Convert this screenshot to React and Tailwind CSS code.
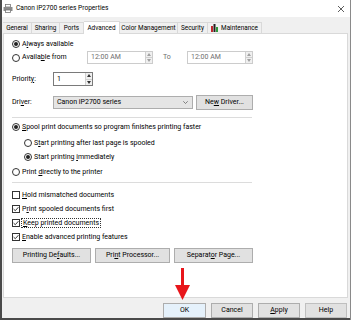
import React from "react";

const F = { fontFamily: 'Roboto, "Noto Sans", sans-serif' };

function U({ children }) {
  return <span className="underline underline-offset-[1px] decoration-[0.5px]">{children}</span>;
}

function Radio({ checked }) {
  return (
    <span className="w-[8px] h-[8px] rounded-full border border-[#333] bg-white flex items-center justify-center shrink-0">
      {checked && <span className="w-[4px] h-[4px] rounded-full bg-[#222]" />}
    </span>
  );
}

function Check({ checked }) {
  return (
    <span className="w-[8px] h-[8px] border border-[#333] bg-white flex items-center justify-center shrink-0">
      {checked && (
        <svg width="6" height="6" viewBox="0 0 6 6">
          <path d="M0.6 3.1 L2.3 4.7 L5.4 1.2" fill="none" stroke="#222" strokeWidth="0.9" />
        </svg>
      )}
    </span>
  );
}

function Spin({ disabled }) {
  const c = disabled ? "#a0a0a0" : "#333";
  return (
    <div className="flex flex-col w-[7px] h-full border-l border-[#d0d0d0]">
      <div className="flex-1 flex items-center justify-center bg-[#f0f0f0] border-b border-[#d0d0d0]">
        <svg width="4" height="3" viewBox="0 0 4 3"><path d="M0 3 L2 0 L4 3Z" fill={c} /></svg>
      </div>
      <div className="flex-1 flex items-center justify-center bg-[#f0f0f0]">
        <svg width="4" height="3" viewBox="0 0 4 3"><path d="M0 0 L2 3 L4 0Z" fill={c} /></svg>
      </div>
    </div>
  );
}

function Btn({ children, w, className = "" }) {
  return (
    <div
      className={`h-[15px] flex items-center justify-center whitespace-nowrap bg-[#e1e1e1] border border-[#adadad] text-[7px] text-black ${className}`}
      style={{ width: w }}
    >
      <span>{children}</span>
    </div>
  );
}

const tab = "h-[11px] flex items-center justify-center whitespace-nowrap bg-[#f0f0f0] border border-b-0 border-l-0 border-[#d9d9d9]";

export default function App() {
  return (
    <div className="w-[351px] h-[320px] bg-[#f0f0f0] relative overflow-hidden text-black" style={F}>
      {/* window edges */}
      <div className="absolute left-0 top-0 bottom-0 w-[2px] bg-[#4a4a4a]" />
      <div className="absolute left-0 right-0 bottom-0 h-[2px] bg-[#4a4a4a]" />
      <div className="absolute right-0 top-0 bottom-0 w-[1px] bg-[#8a8a8a]" />

      {/* title bar */}
      <div className="h-[17px] bg-white flex items-center pl-[3px] pr-[4px]">
        <svg width="10" height="9" viewBox="0 0 10 9" className="shrink-0">
          <rect x="2.5" y="0.5" width="5" height="2.5" fill="#fff" stroke="#777" strokeWidth="0.8" />
          <rect x="0.5" y="3" width="9" height="4" fill="#8a8a8a" />
          <rect x="2.5" y="6" width="5" height="2.5" fill="#fff" stroke="#777" strokeWidth="0.8" />
        </svg>
        <span className="ml-[3px] text-[6.6px] text-black leading-none whitespace-nowrap">Canon iP2700 series Properties</span>
        <span className="ml-auto mr-[2px]">
          <svg width="8" height="8" viewBox="0 0 8 8">
            <path d="M1 1 L7 7 M7 1 L1 7" stroke="#333" strokeWidth="0.8" />
          </svg>
        </span>
      </div>

      {/* tabs */}
      <div className="flex items-end pl-[3px] h-[16px] text-[6.4px] leading-none">
        <div className={`${tab} w-[29px] border-l`}>General</div>
        <div className={`${tab} w-[28px]`}>Sharing</div>
        <div className={`${tab} w-[24px]`}>Ports</div>
        <div className="h-[13px] w-[36px] flex items-center justify-center whitespace-nowrap bg-white border border-b-0 border-l-0 border-[#d9d9d9] relative z-10 -mb-[1px]">Advanced</div>
        <div className={`${tab} w-[58px]`}>Color Management</div>
        <div className={`${tab} w-[30px]`}>Security</div>
        <div className={`${tab} w-[54px] gap-[3px]`}>
          <svg width="7" height="8" viewBox="0 0 7 8">
            <rect x="0" y="2" width="2" height="6" fill="#c0282d" />
            <rect x="2.5" y="0" width="2" height="8" fill="#222" />
            <rect x="5" y="3" width="2" height="5" fill="#2f9a3b" />
          </svg>
          <span>Maintenance</span>
        </div>
      </div>

      {/* panel */}
      <div className="mx-[3px] h-[265px] bg-white border border-[#d9d9d9] text-[7px] leading-none pl-[8px] flex flex-col whitespace-nowrap">
        <div className="mt-[5px] h-[10px] flex items-center">
          <Radio checked />
          <span className="ml-[2px]">A<U>l</U>ways available</span>
        </div>
        <div className="mt-[2px] h-[13px] flex items-center">
          <Radio />
          <span className="ml-[2px] w-[65px]">Availa<U>b</U>le from</span>
          <div className="w-[66px] h-[13px] border border-[#cccccc] bg-white flex items-stretch">
            <span className="flex-1 flex items-center pl-[3px] text-[#6d6d6d]">12:00 AM</span>
            <Spin disabled />
          </div>
          <span className="ml-[10px] w-[24px] text-[#6d6d6d]">To</span>
          <div className="w-[66px] h-[13px] border border-[#cccccc] bg-white flex items-stretch">
            <span className="flex-1 flex items-center pl-[3px] text-[#6d6d6d]">12:00 AM</span>
            <Spin disabled />
          </div>
        </div>
        <div className="mt-[8px] h-[14px] flex items-center">
          <span className="w-[41px]">Priorit<U>y</U>:</span>
          <div className="w-[40px] h-[14px] border border-[#7a7a7a] bg-white flex items-stretch">
            <span className="flex-1 flex items-center pl-[3px]">1</span>
            <Spin />
          </div>
        </div>
        <div className="mt-[10px] h-[13px] flex items-center">
          <span className="w-[41px]">Dri<U>v</U>er:</span>
          <div className="w-[140px] h-[13px] border border-[#adadad] bg-[#e5e5e5] flex items-center pl-[3px] pr-[4px]">
            <span>Canon iP2700 series</span>
            <svg className="ml-auto" width="5" height="3" viewBox="0 0 5 3">
              <path d="M0.3 0.3 L2.5 2.5 L4.7 0.3" fill="none" stroke="#555" strokeWidth="0.7" />
            </svg>
          </div>
          <Btn w="57px" className="ml-[3px] h-[13px]">Ne<U>w</U> Driver...</Btn>
        </div>
        <div className="mt-[8px] h-[1px] w-[240px] bg-[#dcdcdc]" />
        <div className="mt-[4px] h-[10px] flex items-center">
          <Radio checked />
          <span className="ml-[2px]"><U>S</U>pool print documents so program finishes printing faster</span>
        </div>
        <div className="mt-[6px] h-[10px] flex items-center pl-[12px]">
          <Radio />
          <span className="ml-[2px]">S<U>t</U>art printing after last page is spooled</span>
        </div>
        <div className="mt-[4px] h-[10px] flex items-center pl-[12px]">
          <Radio checked />
          <span className="ml-[2px]">Start printing <U>i</U>mmediately</span>
        </div>
        <div className="mt-[5px] h-[10px] flex items-center">
          <Radio />
          <span className="ml-[2px]">Print <U>d</U>irectly to the printer</span>
        </div>
        <div className="mt-[5px] h-[1px] w-[240px] bg-[#dcdcdc]" />
        <div className="mt-[7px] h-[10px] flex items-center">
          <Check />
          <span className="ml-[2px]"><U>H</U>old mismatched documents</span>
        </div>
        <div className="mt-[4px] h-[10px] flex items-center">
          <Check checked />
          <span className="ml-[2px]">P<U>r</U>int spooled documents first</span>
        </div>
        <div className="mt-[4px] h-[10px] flex items-center">
          <Check checked />
          <span className="ml-[1px] px-[1px] h-[10px] flex items-center border border-dotted border-[#333]"><span><U>K</U>eep printed documents</span></span>
        </div>
        <div className="mt-[4px] h-[10px] flex items-center">
          <Check checked />
          <span className="ml-[2px]"><U>E</U>nable advanced printing features</span>
        </div>
        <div className="mt-[6px] flex items-center gap-[4px]">
          <Btn w="79px">Printing De<U>f</U>aults...</Btn>
          <Btn w="75px">Pri<U>n</U>t Processor...</Btn>
          <Btn w="79px">Separat<U>o</U>r Page...</Btn>
        </div>
      </div>

      {/* bottom buttons */}
      <div className="mt-[5px] flex justify-end pr-[4px] gap-[5px]">
        <Btn w="43px" className="bg-[#e5f1fb] border-[#0078d7]">OK</Btn>
        <Btn w="42px">Cancel</Btn>
        <Btn w="42px"><U>A</U>pply</Btn>
        <Btn w="42px" className="bg-[#cccccc] border-[#bfbfbf] text-[#838383]">Help</Btn>
      </div>

      {/* red arrow annotation */}
      <svg className="absolute left-[174px] top-[268px]" width="17" height="33" viewBox="0 0 17 33">
        <rect x="7" y="0" width="3" height="19" fill="#e8161b" />
        <path d="M1 17 L16 17 L8.5 32 Z" fill="#e8161b" />
      </svg>
    </div>
  );
}
